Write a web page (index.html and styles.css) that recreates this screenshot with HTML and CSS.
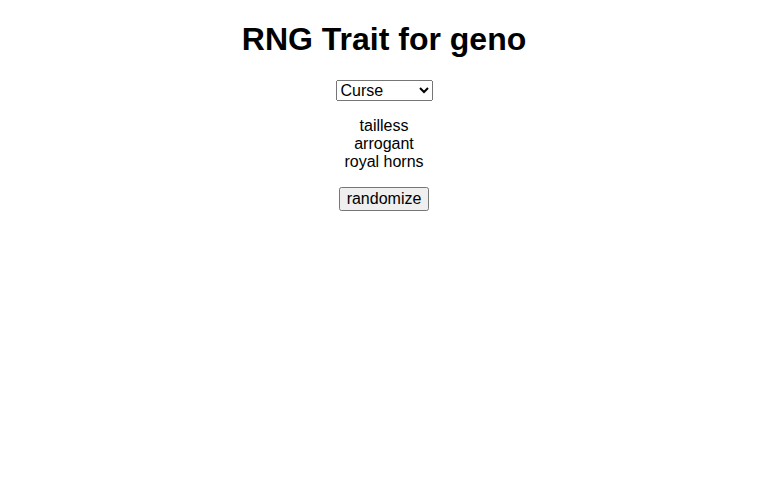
FILE: index.html
```html
<!DOCTYPE html>
<html>
<head>
    <title>RNG Trait for geno</title>
    <link rel="stylesheet" href="styles.css">
</head>
<body>
    <div class="app">
        <h1 class="title">RNG Trait for geno</h1>
        <select class="category">
            <option>Curse</option>
            <option>Blessing</option>
            <option>Mutation</option>
        </select>
        <div class="traits">
            <div>tailless</div>
            <div>arrogant</div>
            <div>royal horns</div>
        </div>
        <button class="randomize-btn">randomize</button>
    </div>
</body>
</html>
```

FILE: styles.css
```css
body {
    margin: 0;
    font-family: 'Liberation Sans', Arial, sans-serif;
}

.app {
    display: flex;
    flex-direction: column;
    align-items: center;
    text-align: center;
}

.title {
    font-size: 32px;
    margin: 21px 0 22px;
}

.category {
    font-family: 'Liberation Sans', Arial, sans-serif;
    font-size: 16px;
    width: 97px;
}

.traits {
    margin: 16px 0;
    font-size: 16px;
    line-height: 18px;
}

.randomize-btn {
    font-family: 'Liberation Sans', Arial, sans-serif;
    font-size: 16px;
}
```
